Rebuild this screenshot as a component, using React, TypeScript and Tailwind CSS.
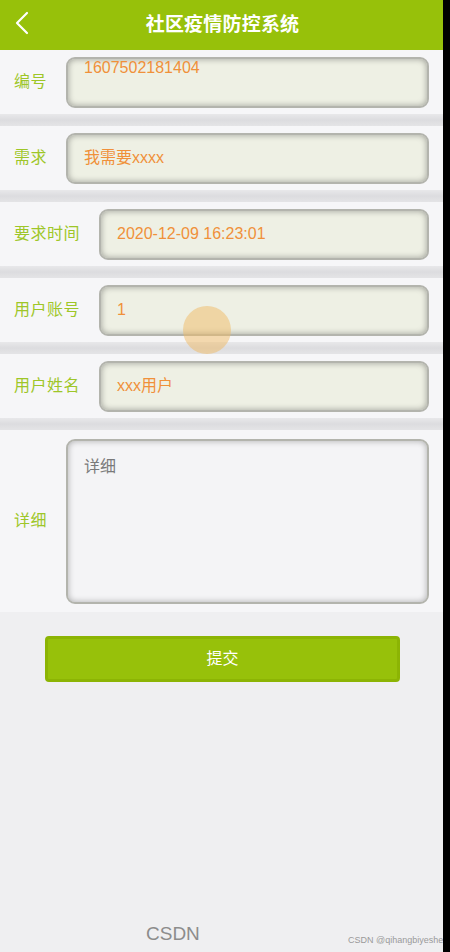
import React from 'react';

const fields = [
  { label: '编号', value: '1607502181404', top: true },
  { label: '需求', value: '我需要xxxx' },
  { label: '要求时间', value: '2020-12-09 16:23:01' },
  { label: '用户账号', value: '1' },
  { label: '用户姓名', value: 'xxx用户' },
];

const font = { fontFamily: '"Liberation Sans", "Noto Sans CJK SC", sans-serif' };

const App: React.FC = () => {
  return (
    <div className="flex w-[450px] h-[952px] bg-black" style={font}>
      <div className="relative flex flex-col w-[443px] h-full bg-[#efeff1] overflow-hidden">
        {/* header */}
        <div className="relative flex items-center justify-center h-[50px] bg-[#97c10a] shrink-0">
          <svg className="absolute left-[14px] top-[11px]" width="18" height="24" viewBox="0 0 18 24" fill="none">
            <path d="M13 2 L3 12 L13 22" stroke="white" strokeWidth="2.2" strokeLinecap="round" strokeLinejoin="round" />
          </svg>
          <span className="text-white text-[19px] font-bold tracking-[0.2px] pl-[2px]">社区疫情防控系统</span>
        </div>

        {/* fields */}
        {fields.map((f) => (
          <div key={f.label} className="flex flex-col">
            <div className="flex items-center h-[64px] bg-[#f6f6f8] pl-[14px] pr-[14px] gap-[19px]">
              <span className="text-[16px] text-[#9ec628] tracking-[0.5px] whitespace-nowrap">{f.label}</span>
              <div
                className={`flex-1 h-[51px] rounded-[9px] border-2 border-[#b3b4ad] bg-[#eef0e4] shadow-[inset_0_0_6px_rgba(0,0,0,0.35)] flex px-[16px] ${
                  f.top ? 'items-start pt-[1px]' : 'items-center'
                }`}
              >
                <span className={`text-[16px] text-[#f0903a] ${f.top ? 'leading-[16px]' : ''}`}>{f.value}</span>
              </div>
            </div>
            <div className="h-[12px] bg-gradient-to-b from-[#e8e8ea] via-[#dcdcdf] to-[#e4e4e6]" />
          </div>
        ))}

        {/* detail */}
        <div className="flex items-center h-[182px] bg-[#f6f6f8] pl-[14px] pr-[14px] gap-[19px]">
          <span className="text-[16px] text-[#9ec628] tracking-[0.5px] whitespace-nowrap">详细</span>
          <div className="flex-1 h-[165px] rounded-[9px] border-2 border-[#b3b4ad] bg-[#f4f4f6] shadow-[inset_0_0_6px_rgba(0,0,0,0.3)] px-[16px] pt-[14px]">
            <span className="text-[16px] text-[#7a7a7a]">详细</span>
          </div>
        </div>

        {/* submit */}
        <div className="flex pl-[45px] pt-[24px]">
          <button className="w-[355px] h-[46px] rounded-[4px] bg-[#97c10a] border-[3px] border-[#8cb404] text-white text-[16px] flex items-center justify-center">
            提交
          </button>
        </div>

        {/* touch indicator */}
        <div className="absolute left-[183px] top-[306px] w-[48px] h-[48px] rounded-full bg-[rgba(240,185,100,0.5)]" />

        {/* watermark */}
        <div className="absolute left-[146px] top-[920px] text-[19px] text-[#8c8c8c] font-light">CSDN</div>
        <div className="absolute left-[348px] top-[934px] text-[9px] text-[#9a9a9a] whitespace-nowrap">CSDN @qihangbiyeshe</div>
      </div>
      <div className="w-[7px] h-full bg-black" />
    </div>
  );
};

export default App;
